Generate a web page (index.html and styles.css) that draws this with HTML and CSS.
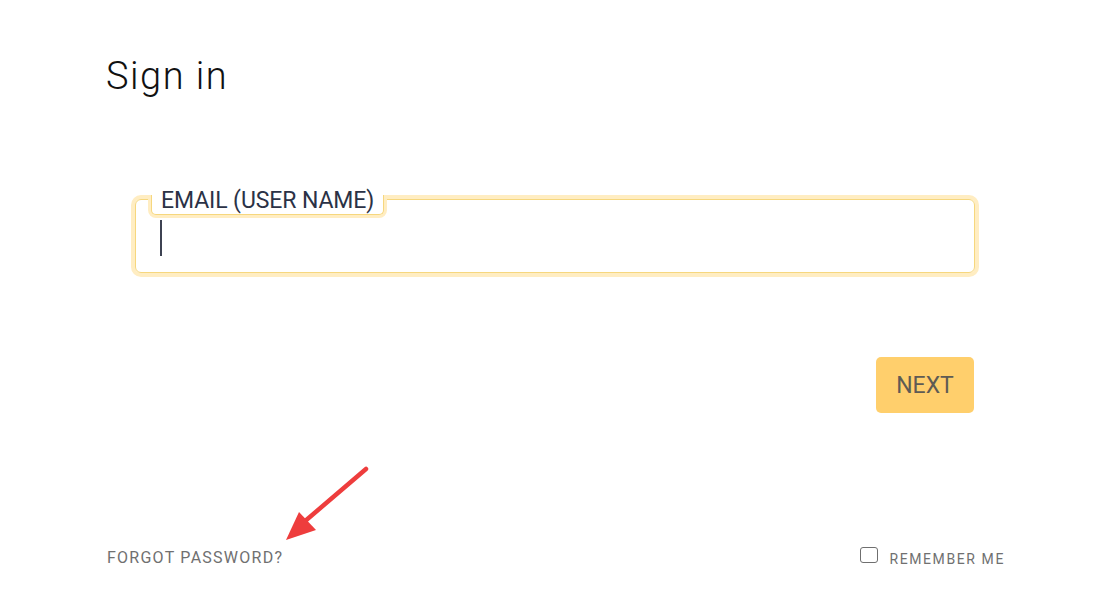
FILE: index.html
```html
<!DOCTYPE html>
<html>
<head>
<meta charset="utf-8">
<link rel="stylesheet" href="styles.css">
</head>
<body>
<main class="page">
  <h1 class="title">Sign in</h1>
  <form class="form">
    <div class="field">
      <span class="field-label">EMAIL (USER NAME)</span>
      <span class="caret"></span>
    </div>
    <div class="actions">
      <button type="button" class="next">NEXT</button>
    </div>
  </form>
  <div class="footer">
    <a class="forgot">FORGOT PASSWORD?</a>
    <label class="remember"><span class="box"></span><span class="remember-text">REMEMBER ME</span></label>
  </div>
  <svg class="arrow" width="100" height="90" viewBox="0 0 100 90">
    <line x1="86" y1="9" x2="24" y2="62" stroke="#ee3d3d" stroke-width="4.5" stroke-linecap="round"/>
    <polygon points="6,80 19,52 36,70" fill="#ee3d3d"/>
  </svg>
</main>
</body>
</html>
```
FILE: styles.css
```css
html, body {
  margin: 0;
  padding: 0;
  background: #ffffff;
}
body {
  font-family: Roboto, "Liberation Sans", Arial, sans-serif;
}
.page {
  position: relative;
  width: 1095px;
  height: 600px;
  box-sizing: border-box;
  padding: 52px 0 0 106px;
}
.title {
  margin: 0;
  font-size: 38px;
  font-weight: 300;
  line-height: 48px;
  color: #111111;
  letter-spacing: 1.5px;
}
.form {
  margin: 99px 0 0 29px;
  width: 840px;
}
.field {
  position: relative;
  box-sizing: border-box;
  height: 74px;
  border: 1px solid #f6d77e;
  border-radius: 6px;
  box-shadow: 0 0 0 4px #ffedc2;
  padding: 20px 0 0 24px;
}
.field-label {
  position: absolute;
  z-index: 1;
  top: -18px;
  left: 15px;
  box-sizing: border-box;
  height: 33px;
  padding: 4px 10px 0 10px;
  font-size: 23px;
  font-weight: 400;
  line-height: 29px;
  letter-spacing: -0.1px;
  color: #2b3246;
  white-space: nowrap;
}
.field-label::before {
  content: "";
  position: absolute;
  z-index: -1;
  left: 0;
  right: 0;
  top: 13px;
  bottom: 0;
  background: #ffffff;
  border: 1px solid #f6d77e;
  border-top: none;
  border-radius: 0 0 5px 5px;
  box-shadow: 0 0 0 3px #ffedc2;
  clip-path: inset(0 -4px -4px -4px);
}
.caret {
  display: block;
  width: 2px;
  height: 36px;
  background: #3d4252;
}
.actions {
  display: flex;
  justify-content: flex-end;
  margin-top: 84px;
  padding-right: 1px;
}
.next {
  width: 98px;
  height: 56px;
  border: none;
  border-radius: 5px;
  background: #ffcf6c;
  color: #5e5b54;
  font-family: Roboto, "Liberation Sans", Arial, sans-serif;
  font-size: 23px;
  padding: 0;
}
.footer {
  display: flex;
  justify-content: space-between;
  align-items: flex-end;
  margin-top: 134px;
  width: 898px;
  padding-left: 1px;
}
.forgot {
  font-size: 16px;
  letter-spacing: 1.25px;
  line-height: 20px;
  color: #707070;
}
.remember {
  display: flex;
  align-items: flex-start;
  gap: 11px;
}
.box {
  box-sizing: border-box;
  width: 18px;
  height: 16px;
  border: 1.5px solid #6f6f6f;
  border-radius: 3px;
}
.remember-text {
  font-size: 14px;
  letter-spacing: 1.6px;
  line-height: 18px;
  padding-top: 3px;
  color: #707070;
}
.arrow {
  position: absolute;
  left: 280px;
  top: 460px;
}
```
